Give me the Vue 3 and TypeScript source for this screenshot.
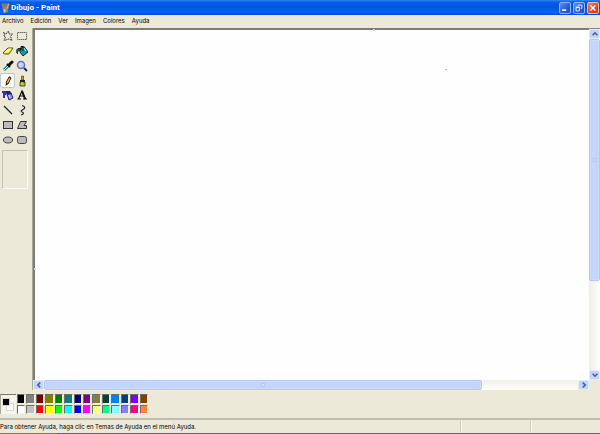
<script setup lang="ts">
import { ref } from 'vue'

interface Tool { id: string; label: string }

const menus: string[] = ['Archivo', 'Edición', 'Ver', 'Imagen', 'Colores', 'Ayuda']

const tools: Tool[] = [
  { id: 'free', label: 'Selección de forma libre' },
  { id: 'select', label: 'Selección' },
  { id: 'eraser', label: 'Borrador' },
  { id: 'fill', label: 'Relleno con color' },
  { id: 'picker', label: 'Seleccionar color' },
  { id: 'zoom', label: 'Ampliación' },
  { id: 'pencil', label: 'Lápiz' },
  { id: 'brush', label: 'Pincel' },
  { id: 'spray', label: 'Aerógrafo' },
  { id: 'text', label: 'Texto' },
  { id: 'line', label: 'Línea' },
  { id: 'curve', label: 'Curva' },
  { id: 'rect', label: 'Rectángulo' },
  { id: 'polygon', label: 'Polígono' },
  { id: 'ellipse', label: 'Elipse' },
  { id: 'round', label: 'Rectángulo redondeado' },
]

const colors: string[] = [
  '#000000', '#808080', '#800000', '#808000', '#008000', '#008080', '#000080',
  '#800080', '#808040', '#004040', '#0080ff', '#004080', '#8000ff', '#804000',
  '#ffffff', '#c0c0c0', '#ff0000', '#ffff00', '#00ff00', '#00ffff', '#0000ff',
  '#ff00ff', '#ffff80', '#00ff80', '#80ffff', '#8080ff', '#ff0080', '#ff8040',
]

const activeTool = ref('pencil')
const foreground = ref('#000000')
const background = ref('#ffffff')
</script>

<template>
  <div class="window">
    <header class="titlebar">
      <svg class="app-icon" viewBox="0 0 12 14" aria-hidden="true">
        <path d="M2 6h8l-1 7H3z" fill="#8d8a78" />
        <path d="M3 8h3v5H4z" fill="#d9c58a" />
        <path d="M3 8 1 2l2-1 2 6z" fill="#e0642c" stroke="#b5743c" />
        <path d="M5 8V1h2v7z" fill="#5f9a5a" stroke="#6d8a58" />
        <path d="M7 8l2-7 2 1-2 6z" fill="#f0b840" stroke="#b88c3c" />
      </svg>
      <h1>Dibujo - Paint</h1>
      <div class="controls">
        <button type="button" aria-label="Minimizar">
          <svg viewBox="0 0 12 12"><path d="M2.500 8.500h5" stroke="#fff" stroke-width="2" /></svg>
        </button>
        <button type="button" aria-label="Restaurar">
          <svg viewBox="0 0 12 12" fill="none" stroke="#fff"><path d="M5 4V2.500h4.500v4H8" /><path d="M2.500 5.500h4v4h-4z" /><path d="M2 5h5" /></svg>
        </button>
        <button type="button" class="close" aria-label="Cerrar">
          <svg viewBox="0 0 12 12"><path d="m3 3 6 6m0-6L3 9" stroke="#fff" stroke-width="1.600" /></svg>
        </button>
      </div>
    </header>

    <nav class="menubar">
      <button v-for="menu in menus" :key="menu" type="button">{{ menu }}</button>
    </nav>

    <main class="workspace">
      <aside class="toolbox">
        <div class="tools">
          <button
            v-for="tool in tools"
            :key="tool.id"
            type="button"
            :class="{ active: tool.id === activeTool }"
            :aria-label="tool.label"
            :aria-pressed="tool.id === activeTool"
            @click="activeTool = tool.id"
          >
            <svg viewBox="0 0 12 12" fill="none">
              <path v-if="tool.id === 'free'" d="M1.500 2.500 4 4l2.500-3L7 4h3.500L8.500 6.500l1.500 4L7 9l-5 1.500L3.500 7 1.500 5.500 3 5z" stroke="#444" stroke-dasharray="1.800 .6" />
              <rect v-else-if="tool.id === 'select'" x="1.500" y="2.500" width="9" height="7" stroke="#666" stroke-dasharray="1.500 .5" />
              <g v-else-if="tool.id === 'eraser'">
                <path d="m1 8 5-5h5L7 9H3z" fill="#f4ee62" stroke="#55500c" />
                <path d="m1.500 8 5-.2L11 3 7 9.300H3z" fill="#a29b1c" />
                <path d="M2.500 7.500 7 3.500h2.500L6 7.500z" fill="#fbf694" />
              </g>
              <g v-else-if="tool.id === 'fill'">
                <path d="m4 4 4-2.500L12 7l-5 4-3-4z" fill="#159b9b" stroke="#092d2d" />
                <path d="M7 6V1.500H5V5M5 4C2 2.500 0 4 1 8c1-2 1-3 4-3" stroke="#111" />
                <path d="M1 4h3v2H2v3H1z" fill="#174f55" />
                <path d="m8 3 2 3" stroke="#a9ffff" />
              </g>
              <g v-else-if="tool.id === 'picker'">
                <path d="m2 10 5-5" stroke="#12868f" stroke-width="3" />
                <path d="m2 10 4-4" stroke="#a8ffff" />
                <path d="m5 4 3 3" stroke="#111" stroke-width="2" />
                <path d="m7 5 3-3" stroke="#111" stroke-width="3" stroke-linecap="round" />
              </g>
              <g v-else-if="tool.id === 'zoom'">
                <path d="m8 8 3 3" stroke="#25255c" stroke-width="2" />
                <circle cx="5" cy="5" r="3.500" fill="#bdd4ff" stroke="#6670bd" stroke-width="1.500" />
                <path d="M3.500 5 5 3.500" stroke="#fff" />
              </g>
              <g v-else-if="tool.id === 'pencil'">
                <path d="m4 8 3-6 2 1-3 6z" fill="#f4c735" stroke="#292000" />
                <path d="m4 8 2 1-2.500 2z" fill="#111" />
                <path d="m7 2 2 1" stroke="#9a1c10" stroke-width="1.500" />
              </g>
              <g v-else-if="tool.id === 'brush'">
                <path d="M5.500 1h2v4h-2z" fill="#a5a226" stroke="#3c3a08" stroke-width=".6" />
                <path d="M4 5h5v2H4z" fill="#222" />
                <path d="M4 7h5v4H4z" fill="#b8b339" stroke="#39370a" stroke-width=".8" />
                <path d="M6 7v3" stroke="#eee77d" />
              </g>
              <g v-else-if="tool.id === 'spray'">
                <path d="m5 5 4-1 2 5-4 2z" fill="#8f96ee" stroke="#202083" />
                <path d="m3 2 5 0 2 3-5 1z" fill="#20208c" />
                <path d="M0 2h4v2H0zM1 4h3v2H1zM1 6h2v3H1z" fill="#3434a2" />
                <path d="m7 6 1 3" stroke="#c5dcff" />
              </g>
              <g v-else-if="tool.id === 'text'">
                <path d="m2.500 10 3.500-8 3.500 8M4 7h4" stroke="#111" stroke-width="1.200" />
                <path d="m6 2 3 8" stroke="#111" stroke-width="2" />
                <path d="M1.500 10H5m2 0h4" stroke="#111" />
              </g>
              <path v-else-if="tool.id === 'line'" d="m2 2 8 8" stroke="#222" stroke-width="1.200" />
              <path v-else-if="tool.id === 'curve'" d="M6 1.500c4 1 3 3 1 4s-3 2 0 3c1 1 0 2-2 2.500" stroke="#222" stroke-width="1.200" />
              <rect v-else-if="tool.id === 'rect'" x="1.500" y="2.500" width="9" height="7" fill="#bbb" stroke="#333" />
              <path v-else-if="tool.id === 'polygon'" d="M4.500 2.500h6L8 6.500h2.500v3h-9z" fill="#bbb" stroke="#333" />
              <ellipse v-else-if="tool.id === 'ellipse'" cx="6" cy="6" rx="4.500" ry="3" fill="#bbb" stroke="#444" />
              <rect v-else x="1.500" y="2.500" width="9" height="7" rx="2" fill="#bbb" stroke="#444" />
            </svg>
          </button>
        </div>
        <div class="options"></div>
      </aside>

      <section class="view">
        <div class="paper" aria-label="Lienzo">
          <span class="mark"></span>
          <i class="handle top"></i>
          <i class="handle left"></i>
        </div>
        <div class="scroll vertical">
          <button type="button" aria-label="Arriba"><svg viewBox="0 0 10 10"><path d="m2 6.500 3-3 3 3" /></svg></button>
          <div class="track"><div class="thumb"><i></i></div></div>
          <button type="button" aria-label="Abajo"><svg viewBox="0 0 10 10"><path d="m2 3.500 3 3 3-3" /></svg></button>
        </div>
        <div class="scroll horizontal">
          <button type="button" aria-label="Izquierda"><svg viewBox="0 0 10 10"><path d="m6.500 2-3 3 3 3" /></svg></button>
          <div class="track"><div class="thumb"><i></i></div></div>
          <button type="button" aria-label="Derecha"><svg viewBox="0 0 10 10"><path d="m3.500 2 3 3-3 3" /></svg></button>
        </div>
      </section>
    </main>

    <section class="palette">
      <div class="current">
        <span class="chip back" :style="{ backgroundColor: background }"></span>
        <span class="chip front" :style="{ backgroundColor: foreground }"></span>
      </div>
      <div class="swatches">
        <button
          v-for="color in colors"
          :key="color"
          type="button"
          :aria-label="color"
          :style="{ backgroundColor: color }"
          @click="foreground = color"
          @contextmenu.prevent="background = color"
        ></button>
      </div>
    </section>

    <footer class="status">
      <p>Para obtener Ayuda, haga clic en Temas de Ayuda en el menú Ayuda.</p>
      <span></span>
      <span></span>
    </footer>
    <div class="taskbar"><i></i></div>
  </div>
</template>

<style>
body { margin: 0; overflow: hidden; }
</style>

<style scoped>
* { box-sizing: border-box; }
button { padding: 0; border: 0; background: none; font: inherit; color: inherit; }
svg { display: block; }
.window {
  display: flex;
  flex-direction: column;
  height: 100vh;
  background: #ece9d8;
  color: #000;
  font: 6px/12px Inter, "DejaVu Sans Condensed", sans-serif;
}
.titlebar {
  display: flex;
  align-items: center;
  flex: none;
  height: 15px;
  padding: 0 1px;
  background: linear-gradient(#2f86f6 0, #0a5bea 15%, #0054e3 45%, #0064fc 85%, #0148cc);
}
.app-icon { width: 9px; height: 12px; }
h1 {
  flex: 1;
  margin: 0 0 0 1px;
  color: #fff;
  font: bold 8px/14px "Trebuchet MS", Roboto, sans-serif;
}
.controls { display: flex; gap: 2px; }
.controls button {
  width: 12px;
  height: 12px;
  border: 1px solid #8fb4f8;
  border-radius: 2px;
  background: linear-gradient(135deg, #6390ef, #2459dc 60%, #1d4fd0);
}
.controls .close { border-color: #f0b8a8; background: linear-gradient(135deg, #ee8b68, #d94a20 60%, #c63c12); }
.controls svg { width: 10px; height: 10px; }
.menubar {
  display: flex;
  align-items: flex-start;
  flex: none;
  gap: 7px;
  height: 13px;
  padding: 0 2px;
}
.workspace { display: flex; flex: 1; min-height: 0; }
.toolbox { flex: none; width: 33px; padding: 1px 0 0; border-right: 1px solid #aaa899; }
.tools {
  display: grid;
  grid-template-columns: 15px 14px;
  grid-template-rows: repeat(8, 1fr);
  height: 118px;
}
.tools button { display: grid; place-items: center; }
.tools svg { width: 12px; height: 12px; }
.tools .active { border: 1px solid #b9cbd6; border-radius: 2px; background: #fdfdfb; }
.options {
  width: 26px;
  height: 39px;
  margin: 3px 2px;
  border: 1px solid;
  border-color: #c4c1b1 #fbfaf4 #fbfaf4 #c4c1b1;
}
.view {
  display: grid;
  flex: 1;
  grid-template-columns: 1fr 11px;
  grid-template-rows: 1fr 10px;
  min-width: 0;
}
.paper {
  position: relative;
  border-top: 2px solid #7f7e76;
  border-left: 2px solid #7f7e76;
  background: #fefefe;
}
.mark { position: absolute; top: 11%; left: 74%; width: 2px; height: 1px; background: #bbb; }
.handle { position: absolute; width: 2px; height: 2px; background: #bcdcff; }
.handle.top { top: -1px; left: 61%; }
.handle.left { top: 68%; left: -1px; }
.scroll { display: flex; background: #f5f5f1; }
.vertical { flex-direction: column; border-top: 1px solid #85847b; }
.scroll button {
  display: grid;
  place-items: center;
  flex: none;
  width: 11px;
  height: 10px;
  border: 1px solid #e2eaff;
  border-radius: 2px;
  background: #c2d3fc;
}
.scroll svg { width: 8px; height: 8px; }
.scroll path { fill: none; stroke: #4d6185; stroke-width: 2; }
.track { flex: 1; }
.vertical .track { background: linear-gradient(90deg, #eeede5, #fefefb); }
.horizontal .track { background: linear-gradient(#f0f0ea, #fefefb); }
.thumb {
  display: grid;
  place-items: center;
  border: 1px solid #b4c8f6;
  border-radius: 2px;
  background: #c3d4fd;
  box-shadow: inset 0 0 0 1px #cddafe;
}
.vertical .thumb { height: 73%; }
.horizontal .thumb { width: 82%; height: 10px; }
.thumb i { width: 4px; height: 4px; border: 1px solid #b4c8f6; background: #d3e0ff; }
.palette {
  display: flex;
  flex: none;
  gap: 1px;
  height: 28px;
  padding: 4px 0;
}
.current {
  position: relative;
  width: 16px;
  height: 20px;
  border-top: 1px solid #77756a;
  border-left: 1px solid #aaa797;
  background: #f5f4ee;
}
.chip { position: absolute; width: 8px; height: 8px; border: 1px solid #d9d6c7; }
.chip.back { right: 2px; bottom: 3px; }
.chip.front { top: 3px; left: 1px; }
.swatches {
  display: grid;
  grid-template-columns: repeat(14, 1fr);
  grid-template-rows: 1fr 1fr;
  gap: 1px;
  width: 131px;
}
.swatches button {
  border: 1px solid;
  border-color: #706e62 #f4f2e8 #f4f2e8 #706e62;
}
.status {
  display: flex;
  flex: none;
  height: 15px;
  border-top: 2px solid #c1beaf;
  line-height: 14px;
}
.status p { flex: 1; margin: 0; white-space: nowrap; }
.status span { width: 70px; margin: 1px 0; border-left: 1px solid #cfccbc; box-shadow: inset 1px 0 #faf9f2; }
.taskbar { flex: none; height: 1px; background: #2a6fe0; }
.taskbar i { display: block; width: 57px; height: 1px; background: #4c9a48; }
</style>
